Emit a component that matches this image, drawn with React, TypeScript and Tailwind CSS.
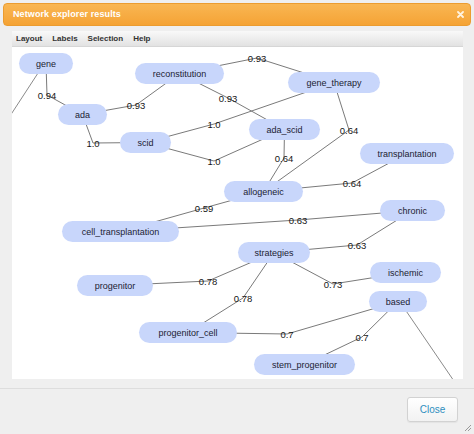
import React from 'react';

type GraphNode = {
  id: string;
  x: number;
  y: number;
  w: number;
};

type GraphEdge = {
  from: string;
  to: string;
  label: string;
  lx: number;
  ly: number;
};

// page coordinates; the canvas starts at (12, 47)
const nodes: GraphNode[] = [
  { id: 'gene', x: 19, y: 53, w: 54 },
  { id: 'reconstitution', x: 135, y: 63, w: 89 },
  { id: 'ada', x: 58, y: 104, w: 49 },
  { id: 'gene_therapy', x: 288, y: 72, w: 92 },
  { id: 'ada_scid', x: 249, y: 119, w: 71 },
  { id: 'scid', x: 120, y: 132, w: 51 },
  { id: 'allogeneic', x: 224, y: 181, w: 79 },
  { id: 'transplantation', x: 360, y: 143, w: 94 },
  { id: 'cell_transplantation', x: 62, y: 221, w: 117 },
  { id: 'chronic', x: 380, y: 200, w: 65 },
  { id: 'strategies', x: 238, y: 242, w: 72 },
  { id: 'progenitor', x: 77, y: 275, w: 76 },
  { id: 'ischemic', x: 370, y: 262, w: 71 },
  { id: 'based', x: 369, y: 291, w: 58 },
  { id: 'progenitor_cell', x: 139, y: 322, w: 98 },
  { id: 'stem_progenitor', x: 254, y: 354, w: 101 },
];

const edges: GraphEdge[] = [
  { from: 'gene', to: 'ada', label: '0.94', lx: 47, ly: 95 },
  { from: 'ada', to: 'reconstitution', label: '0.93', lx: 136, ly: 105 },
  { from: 'reconstitution', to: 'gene_therapy', label: '0.93', lx: 257, ly: 58 },
  { from: 'reconstitution', to: 'ada_scid', label: '0.93', lx: 228, ly: 98 },
  { from: 'ada', to: 'scid', label: '1.0', lx: 93, ly: 143 },
  { from: 'scid', to: 'gene_therapy', label: '1.0', lx: 214, ly: 124 },
  { from: 'scid', to: 'ada_scid', label: '1.0', lx: 214, ly: 161 },
  { from: 'ada_scid', to: 'allogeneic', label: '0.64', lx: 284, ly: 158 },
  { from: 'gene_therapy', to: 'allogeneic', label: '0.64', lx: 349, ly: 130 },
  { from: 'allogeneic', to: 'transplantation', label: '0.64', lx: 352, ly: 183 },
  { from: 'allogeneic', to: 'cell_transplantation', label: '0.59', lx: 204, ly: 208 },
  { from: 'cell_transplantation', to: 'chronic', label: '0.63', lx: 298, ly: 220 },
  { from: 'chronic', to: 'strategies', label: '0.63', lx: 357, ly: 245 },
  { from: 'progenitor', to: 'strategies', label: '0.78', lx: 208, ly: 281 },
  { from: 'strategies', to: 'progenitor_cell', label: '0.78', lx: 243, ly: 298 },
  { from: 'strategies', to: 'ischemic', label: '0.73', lx: 333, ly: 284 },
  { from: 'progenitor_cell', to: 'based', label: '0.7', lx: 287, ly: 334 },
  { from: 'based', to: 'stem_progenitor', label: '0.7', lx: 362, ly: 337 },
];

const NODE_H = 21;

function center(id: string) {
  const n = nodes.find((m) => m.id === id)!;
  return { x: n.x + n.w / 2, y: n.y + NODE_H / 2 };
}

function GraphCanvas() {
  return (
    <svg width="451" height="332" className="block">
      <g transform="translate(-12,-47)">
        {/* edges that leave the visible area */}
        <line x1="40" y1="70" x2="10" y2="116" stroke="#8a8a8a" strokeWidth="1" />
        <line x1="400" y1="302" x2="456" y2="384" stroke="#8a8a8a" strokeWidth="1" />

        {edges.map((e, i) => {
          const a = center(e.from);
          const b = center(e.to);
          return (
            <polyline
              key={i}
              points={`${a.x},${a.y} ${e.lx},${e.ly} ${b.x},${b.y}`}
              fill="none"
              stroke="#7a7a7a"
              strokeWidth="1"
            />
          );
        })}

        {nodes.map((n) => (
          <g key={n.id}>
            <rect x={n.x} y={n.y} width={n.w} height={NODE_H} rx="10.5" fill="#c8d6fb" />
            <text
              x={n.x + n.w / 2}
              y={n.y + NODE_H / 2 + 0.5}
              textAnchor="middle"
              dominantBaseline="central"
              fontSize="9"
              fill="#1c2333"
              fontFamily="'Liberation Sans', Arial, sans-serif"
            >
              {n.id}
            </text>
          </g>
        ))}

        {edges.map((e, i) => (
          <text
            key={i}
            x={e.lx}
            y={e.ly}
            textAnchor="middle"
            dominantBaseline="central"
            fontSize="9.5"
            fill="#161616"
            fontFamily="'Liberation Sans', Arial, sans-serif"
          >
            {e.label}
          </text>
        ))}
      </g>
    </svg>
  );
}

export default function App() {
  return (
    <div className="relative w-[474px] h-[434px] overflow-hidden bg-[#efefef] flex flex-col font-['Liberation_Sans',Arial,sans-serif]">
      {/* title bar */}
      <div className="mx-[3px] mt-[3px] h-[23px] rounded-[4px] border border-[#eb9c30] bg-gradient-to-b from-[#f9b652] to-[#f5a334] flex items-center justify-between pl-[9px] pr-[6px]">
        <span className="text-[9px] font-bold text-white tracking-[0.1px]">Network explorer results</span>
        <svg width="7" height="7" viewBox="0 0 7 7">
          <path d="M1 1 L6 6 M6 1 L1 6" stroke="#fff3e0" strokeWidth="1.8" strokeLinecap="round" />
        </svg>
      </div>

      {/* explorer panel */}
      <div className="ml-[12px] mr-[11px] mt-[5px] flex flex-col">
        <div className="h-[16px] bg-gradient-to-b from-[#f9f9f9] to-[#e2e2e2] border-b border-[#d6d6d6] flex items-center pl-[4px] gap-[10px] text-[8px] font-bold text-[#333]">
          <span>Layout</span>
          <span>Labels</span>
          <span>Selection</span>
          <span>Help</span>
        </div>
        <div className="h-[332px] bg-white overflow-hidden">
          <GraphCanvas />
        </div>
      </div>

      {/* footer */}
      <div className="mt-[9px] flex-1 border-t border-[#dddddd] flex justify-end items-start pt-[8px] pr-[16px]">
        <button className="w-[51px] h-[25px] rounded-[3px] border border-[#d2d2d2] bg-gradient-to-b from-white to-[#f2f2f2] text-[10px] text-[#2f8fbf] shadow-[0_1px_1px_rgba(0,0,0,0.05)]">
          Close
        </button>
      </div>

      {/* resize grip */}
      <svg className="absolute right-[2px] bottom-[2px]" width="8" height="8" viewBox="0 0 8 8">
        <path d="M7 1 L1 7 M7 4 L4 7" stroke="#9a9a9a" strokeWidth="1" />
      </svg>
    </div>
  );
}
